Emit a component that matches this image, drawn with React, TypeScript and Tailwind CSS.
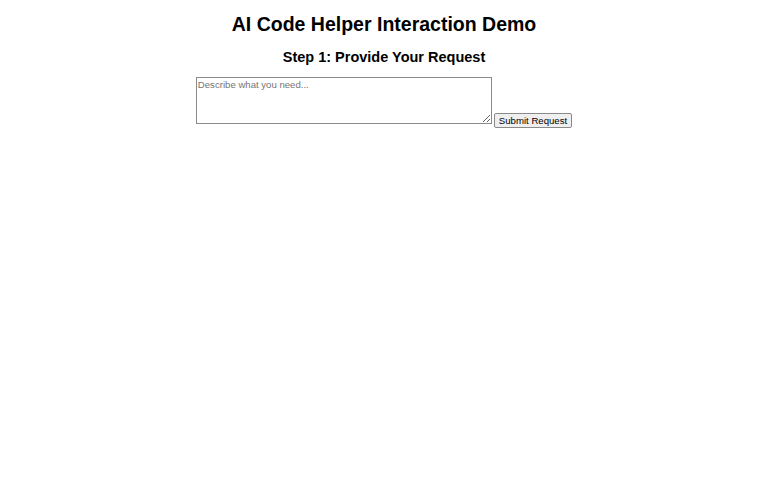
import React from 'react';

export default function App() {
  return (
    <div className="min-h-[480px] bg-white text-black font-['Liberation_Sans',Arial,sans-serif]">
      <div className="flex flex-col items-center pt-[13px]">
        <h1 className="text-[19.5px] leading-[22px] font-bold">AI Code Helper Interaction Demo</h1>
        <h2 className="mt-[14px] text-[14.5px] leading-[17px] font-bold">Step 1: Provide Your Request</h2>
        <div className="mt-[11px] flex items-end gap-[2px]">
          <textarea
            placeholder="Describe what you need..."
            className="block w-[296px] h-[47px] border border-[#8a8a8a] px-[1px] py-[1px] text-[9.6px] leading-[12px] placeholder:text-[#757575] outline-none"
          />
          <button className="mb-[-3px] h-[15px] px-[4px] border border-[#8a8a8a] rounded-[2px] bg-[#efefef] text-[9.6px] leading-[12px] text-black translate-y-[1px]">
            Submit Request
          </button>
        </div>
      </div>
    </div>
  );
}
